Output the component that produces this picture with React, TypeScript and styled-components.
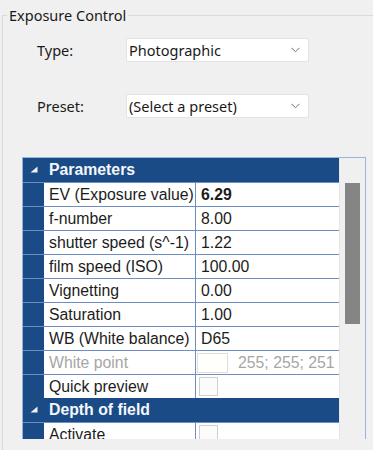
import React from "react";
import styled, { createGlobalStyle } from "styled-components";

const GlobalStyle = createGlobalStyle`
  html, body {
    margin: 0;
    padding: 0;
    background: #f0f0f0;
    overflow: hidden;
  }
  body {
    width: 373px;
    height: 450px;
  }
`;

const uiFont = `"Noto Sans", "Open Sans", sans-serif`;
const gridFont = `"Liberation Sans", Arial, sans-serif`;

const HEADER_BLUE = "#1b4b86";
const GRID_LINE = "#6d8ec2";

const Group = styled.fieldset`
  margin: 5px 0 0 2px;
  padding: 0 0 40px 0;
  width: 400px;
  border: 1px solid #dadada;
  box-sizing: border-box;
  font-family: ${uiFont};
`;

const Legend = styled.legend`
  margin-left: 4px;
  padding: 0 2px;
  font-size: 14.5px;
  line-height: 20px;
  color: #1a1a1a;
`;

const FormRows = styled.div`
  display: flex;
  flex-direction: column;
  gap: 32px;
  margin-top: 13px;
  padding-left: 34px;
`;

const FormRow = styled.div`
  display: flex;
  align-items: center;
`;

const Label = styled.span`
  width: 89px;
  font-size: 14.5px;
  color: #1a1a1a;
`;

const Combo = styled.div`
  display: flex;
  align-items: center;
  justify-content: space-between;
  width: 183px;
  height: 24px;
  box-sizing: border-box;
  padding: 0 8px 0 2px;
  background: #ffffff;
  border: 1px solid #e2e2e2;
  border-radius: 2px;
  font-size: 14.5px;
  color: #1a1a1a;
`;

const Chevron = () => (
  <svg width="9" height="6" viewBox="0 0 9 6">
    <path d="M0.5 0.8 L4.5 4.8 L8.5 0.8" fill="none" stroke="#6f6f6f" strokeWidth="1" />
  </svg>
);

const Grid = styled.div`
  display: flex;
  margin: 39px 0 0 19px;
  width: 344px;
  height: 282px;
  box-sizing: border-box;
  border: 1px solid #95b6dc;
  border-bottom: none;
  overflow: hidden;
  font-family: ${gridFont};
  font-size: 15.8px;
`;

const Rows = styled.div`
  flex: 1;
  display: flex;
  flex-direction: column;
`;

const CategoryRow = styled.div`
  display: flex;
  align-items: center;
  flex: none;
  height: 24px;
  background: ${HEADER_BLUE};
  color: #ffffff;
  font-weight: bold;
`;

const Expander = styled.span`
  display: flex;
  align-items: center;
  justify-content: flex-end;
  width: 15px;
  padding-right: 6px;
  margin-top: -1px;
`;

const CategoryTitle = styled.span`
  padding-left: 5px;
  color: #f4f7fb;
`;

const PropRow = styled.div`
  display: flex;
  flex: none;
  height: 24px;
  box-sizing: border-box;
  border-top: 1px solid ${GRID_LINE};
  background: ${HEADER_BLUE};
  padding-left: 21px;
`;

const Cell = styled.div<{ $w?: number; $bold?: boolean; $disabled?: boolean }>`
  display: flex;
  align-items: center;
  gap: 10px;
  box-sizing: border-box;
  height: 23px;
  padding-left: 5px;
  background: #ffffff;
  white-space: nowrap;
  overflow: hidden;
  width: ${(p) => (p.$w ? `${p.$w}px` : "auto")};
  flex: ${(p) => (p.$w ? "none" : "1")};
  font-weight: ${(p) => (p.$bold ? "bold" : "normal")};
  color: ${(p) => (p.$disabled ? "#a6a6a6" : "#1c1c1c")};
  border-right: ${(p) => (p.$w ? `1px solid ${GRID_LINE}` : "none")};
`;

const Swatch = styled.span`
  width: 31px;
  height: 20px;
  box-sizing: border-box;
  border: 1px solid #dedede;
  background: #fffffb;
  margin-left: -4px;
  flex: none;
`;

const CheckBox = styled.span`
  width: 19px;
  height: 19px;
  box-sizing: border-box;
  border: 1px solid #cfcfcf;
  background: #fbfbfb;
  margin-left: -2px;
  flex: none;
`;

const ScrollTrack = styled.div`
  flex: none;
  width: 26px;
  background: #f0f0f0;
  border-left: 1px solid #e6e6e6;
  box-sizing: border-box;
  padding: 25px 0 0 5px;
`;

const ScrollThumb = styled.div`
  width: 15px;
  height: 141px;
  background: #858585;
`;

const Triangle = () => (
  <svg width="8" height="7" viewBox="0 0 8 7">
    <path d="M0.5 6.5 L7.5 6.5 L7.5 0.5 Z" fill="#eef2f8" />
  </svg>
);

type Prop = {
  name: string;
  value?: string;
  bold?: boolean;
  disabled?: boolean;
  kind?: "text" | "color" | "check";
};

const parameters: Prop[] = [
  { name: "EV (Exposure value)", value: "6.29", bold: true },
  { name: "f-number", value: "8.00" },
  { name: "shutter speed (s^-1)", value: "1.22" },
  { name: "film speed (ISO)", value: "100.00" },
  { name: "Vignetting", value: "0.00" },
  { name: "Saturation", value: "1.00" },
  { name: "WB (White balance)", value: "D65" },
  { name: "White point", value: "255; 255; 251", disabled: true, kind: "color" },
  { name: "Quick preview", kind: "check" },
];

const depth: Prop[] = [{ name: "Activate", kind: "check" }];

const Category = ({ title }: { title: string }) => (
  <CategoryRow>
    <Expander>
      <Triangle />
    </Expander>
    <CategoryTitle>{title}</CategoryTitle>
  </CategoryRow>
);

const PropertyRow = ({ p }: { p: Prop }) => (
  <PropRow>
    <Cell $w={152} $disabled={p.disabled}>
      {p.name}
    </Cell>
    <Cell $bold={p.bold} $disabled={p.disabled}>
      {p.kind === "color" && <Swatch />}
      {p.kind === "check" && <CheckBox />}
      {p.value}
    </Cell>
  </PropRow>
);

export default function App() {
  return (
    <>
      <GlobalStyle />
      <Group>
        <Legend>Exposure Control</Legend>
        <FormRows>
          <FormRow>
            <Label>Type:</Label>
            <Combo>
              Photographic
              <Chevron />
            </Combo>
          </FormRow>
          <FormRow>
            <Label>Preset:</Label>
            <Combo>
              (Select a preset)
              <Chevron />
            </Combo>
          </FormRow>
        </FormRows>
        <Grid>
          <Rows>
            <Category title="Parameters" />
            {parameters.map((p) => (
              <PropertyRow key={p.name} p={p} />
            ))}
            <Category title="Depth of field" />
            {depth.map((p) => (
              <PropertyRow key={p.name} p={p} />
            ))}
          </Rows>
          <ScrollTrack>
            <ScrollThumb />
          </ScrollTrack>
        </Grid>
      </Group>
    </>
  );
}
